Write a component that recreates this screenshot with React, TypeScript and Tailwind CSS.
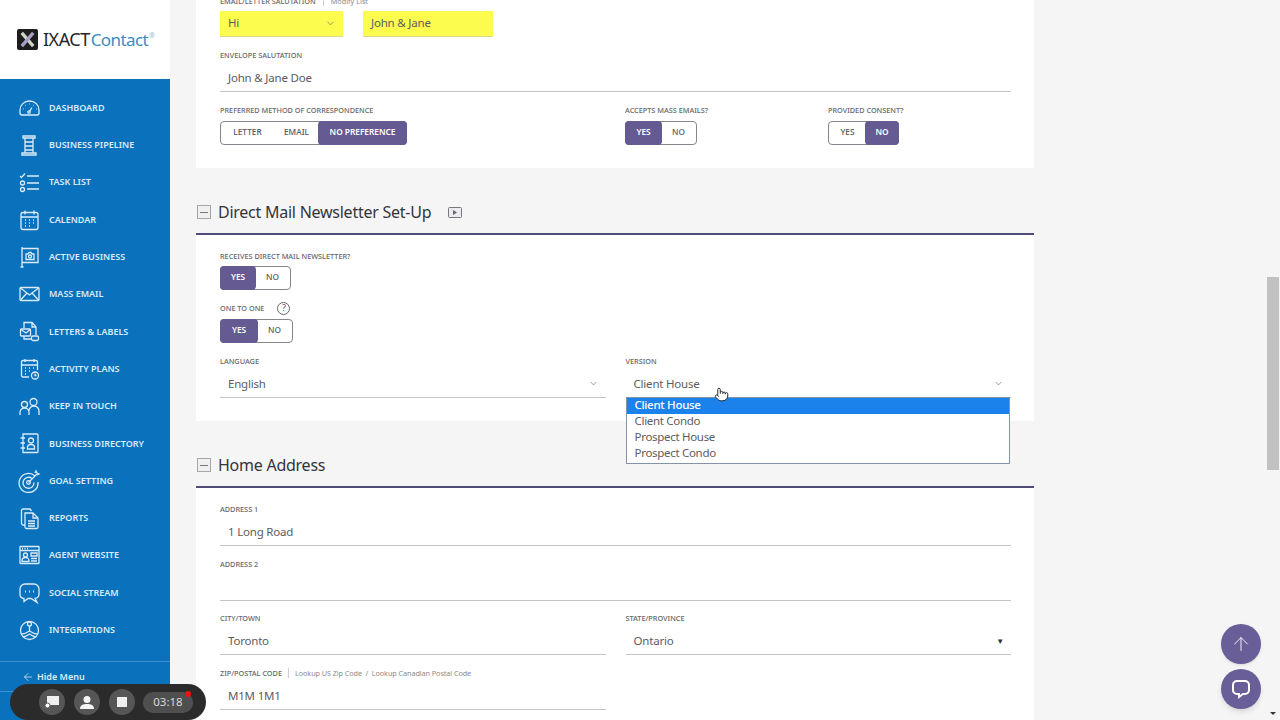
import { ArrowLeft, ArrowUp, ChevronDown, Pointer } from "lucide-react";
import type { ReactNode } from "react";

const navItems: { label: string; icon: ReactNode }[] = [
  {
    label: "DASHBOARD",
    icon: (
      <>
        <path d="M5 19h15a2 2 0 0 0 2-2v-3a9.5 9 0 0 0-19 0v3a2 2 0 0 0 2 2z" />
        <path d="M12.5 15.500l2.500-4M6 13h.5M8.500 9.500h.5M12.500 8h.5M16.500 9.500h.5M19 13h.5" />
        <circle cx="12" cy="16" r="1.200" />
      </>
    ),
  },
  {
    label: "BUSINESS PIPELINE",
    icon: <path d="M6 3h12v2H6zM5 20h14v2H5zM8 5v15M16 5v15M8 9h8M8 13h8M8 17h8" />,
  },
  {
    label: "TASK LIST",
    icon: (
      <>
        <path d="M3 6l1.500 1.500L8 3.500M10 6h12M10 13h12M10 19h12" />
        <circle cx="5.500" cy="13" r="2" />
        <circle cx="5.500" cy="19.500" r="2" />
      </>
    ),
  },
  {
    label: "CALENDAR",
    icon: (
      <>
        <rect x="4" y="4.500" width="17" height="17" rx="2" />
        <path d="M8 2.500v4M17 2.500v4M4 9h17M8 12h1M12 12h1M16 12h1M8 15h1M12 15h1M16 15h1M8 18h1M12 18h1" />
      </>
    ),
  },
  {
    label: "ACTIVE BUSINESS",
    icon: (
      <>
        <path d="M5 2v20M3.500 22h3M5 3.500h16v14H5" />
        <path d="M9 9h2l1-1.500h2l1 1.500h2v5.500H9z" />
        <circle cx="13" cy="11.500" r="1.500" />
      </>
    ),
  },
  {
    label: "MASS EMAIL",
    icon: (
      <>
        <rect x="3" y="5.500" width="19" height="13" rx="1" />
        <path d="M3.500 6l9 7 9-7M3.500 18l6.500-7M21.500 18l-6.500-7" />
      </>
    ),
  },
  {
    label: "LETTERS & LABELS",
    icon: (
      <>
        <path d="M7 9V3.500h8l4 4.500v8" />
        <path d="M15 3.500V8h4" />
        <rect x="3.500" y="10" width="10" height="7" rx="1" />
        <path d="M4 10.500l5 3.500 4-3.500" />
        <rect x="14.500" y="17" width="7" height="4.500" rx="1.500" />
        <path d="M7 17v3h7" />
      </>
    ),
  },
  {
    label: "ACTIVITY PLANS",
    icon: (
      <>
        <path d="M12 20H6a1.500 1.500 0 0 1-1.500-1.500V5A1.500 1.500 0 0 1 6 3.500h13A1.500 1.500 0 0 1 20.500 5v8" />
        <path d="M8 2v3M17 2v3M4.500 8h16M8 11h1M12 11h1M16 11h1M8 14h1M12 14h1M8 17h1" />
        <circle cx="18" cy="18.500" r="3.500" />
        <path d="M18 16.500v2h1.500" />
      </>
    ),
  },
  {
    label: "KEEP IN TOUCH",
    icon: (
      <>
        <circle cx="7.500" cy="10.500" r="3" />
        <circle cx="16.500" cy="8" r="3.500" />
        <path d="M3 21v-2.500a4.500 4.500 0 0 1 9 0V21M12 17a5 5 0 0 1 10 0v4" />
      </>
    ),
  },
  {
    label: "BUSINESS DIRECTORY",
    icon: (
      <>
        <path d="M6 3h14a1 1 0 0 1 1 1v16.500a1 1 0 0 1-1 1H6z" />
        <path d="M3.500 7H8M3.500 12H8M3.500 17H8" />
        <circle cx="14" cy="9.500" r="2.500" />
        <path d="M10.500 18v-1.500a3.500 3 0 0 1 7 0V18z" />
      </>
    ),
  },
  {
    label: "GOAL SETTING",
    icon: (
      <>
        <path d="M18 7a9.500 9.500 0 1 0 3 6" />
        <path d="M15 9.500a5.500 5.500 0 1 0 2 4" />
        <circle cx="11.500" cy="13.500" r="1.800" />
        <path d="M11.500 13.500L20 5M18 4l1-2 1 2 2 1-2 1" />
      </>
    ),
  },
  {
    label: "REPORTS",
    icon: (
      <>
        <path d="M8 19H6a1.500 1.500 0 0 1-1.500-1.500v-13A1.500 1.500 0 0 1 6 3h7l1.500 2" />
        <path d="M8 7h8l5 5v9a1.500 1.500 0 0 1-1.500 1.500H9.500A1.500 1.500 0 0 1 8 21z" />
        <path d="M16 7v5h5M11 15h7M11 17.500h7M11 20h7" />
      </>
    ),
  },
  {
    label: "AGENT WEBSITE",
    icon: (
      <>
        <rect x="3" y="3.500" width="19" height="17" rx="0.500" />
        <path d="M3 7.500h19M5 5.500h1M7.500 5.500h1M10 5.500h1M14 10h6v3h-6zM14 15.500h6M14 18h6" />
        <circle cx="8.500" cy="12" r="2" />
        <path d="M5 18.500v-1a3.500 3 0 0 1 7 0v1z" />
      </>
    ),
  },
  {
    label: "SOCIAL STREAM",
    icon: (
      <>
        <path d="M7 17.500h-.5A4.500 4.500 0 0 1 3 13V8a5 5 0 0 1 5-5h9a5 5 0 0 1 5 5v5a4.500 4.500 0 0 1-4 4.400l2 4-6-4-3 .1-4 3z" />
        <path d="M8 10.500h1M12 10.500h1M16 10.500h1" strokeWidth="1.800" />
      </>
    ),
  },
  {
    label: "INTEGRATIONS",
    icon: (
      <>
        <circle cx="12.500" cy="12.500" r="9" />
        <circle cx="12.500" cy="6" r="2" />
        <path d="M12.500 8v5M4.500 16c3 0 5-1 8-3 3 2 5 3 8 3M6 19c3-.5 5-2 6.500-3 1.500 1 3.500 2.500 6.500 3" />
      </>
    ),
  },
];

function Sidebar() {
  return (
    <aside className="flex w-[170px] shrink-0 flex-col">
      <div className="flex h-[79px] items-center bg-white pb-[1px] pl-[17px]">
        <svg viewBox="0 0 22 22" className="h-[21px] w-[21px]">
          <rect width="22" height="22" rx="2" fill="#1d1d1f" />
          <path d="M5 4l12 14" stroke="#cdd5c8" strokeWidth="3.500" />
          <path d="M17 4L5 18" stroke="#a89fc4" strokeWidth="3.500" />
        </svg>
        <span className="ml-[5px] text-[18px] leading-none tracking-[-0.5px] text-[#26262a]">IXACT</span>
        <span className="ml-[1px] text-[17px] leading-none tracking-[-0.6px] text-[#3c8cc0]">Contact</span>
        <span className="mb-[8px] ml-[1px] text-[7px] leading-none text-[#8fb8d4]">®</span>
      </div>
      <div className="flex flex-1 flex-col bg-[#0a72bd]">
        <nav className="flex flex-col pt-[10px]">
          {navItems.map((item) => (
            <div key={item.label} className="flex h-[37.3px] items-center pl-[17px]">
              <svg
                viewBox="0 0 24 24"
                fill="none"
                stroke="#dcebf7"
                strokeWidth="1.300"
                className="h-[24px] w-[24px]"
              >
                {item.icon}
              </svg>
              <span className="ml-[8px] text-[9px] font-semibold text-[#dcebf7]">{item.label}</span>
            </div>
          ))}
        </nav>
        <div className="mt-[13px] flex h-[31px] items-center border-y border-[#3e8fcb] pl-[22px] text-[#dcebf7]">
          <ArrowLeft size={12} strokeWidth={1.500} />
          <span className="ml-[3px] text-[9px] font-semibold">Hide Menu</span>
        </div>
      </div>
    </aside>
  );
}

function Label({ children }: { children: ReactNode }) {
  return <div className="h-[10px] text-[7.300px] font-medium leading-[10px] text-[#66666c]">{children}</div>;
}

function Field({ label, value, chevron, caret }: { label: ReactNode; value?: string; chevron?: boolean; caret?: boolean }) {
  return (
    <div className="flex flex-col">
      <Label>{label}</Label>
      <div className="flex h-[32px] items-center justify-between border-b border-[#c4c4c6] pl-[8px] pr-[7px] pt-[4px] text-[11.500px] tracking-[-0.2px] text-[#5c5c60]">
        <span>{value}</span>
        {chevron && <ChevronDown size={11} strokeWidth={1.300} />}
        {caret && <span className="text-[8px] text-[#333]">▼</span>}
      </div>
    </div>
  );
}

function Toggle({ options, active, widths }: { options: string[]; active: string; widths: number[] }) {
  return (
    <div className="flex h-[24px] w-fit rounded-[4px] border border-[#85858b] bg-white">
      {options.map((o, i) => (
        <div
          key={o}
          style={{ width: widths[i] }}
          className={
            o === active
              ? "-m-[1px] flex items-center justify-center rounded-[4px] bg-[#655a91] pb-[1px] text-[8.300px] font-semibold text-white"
              : "flex items-center justify-center pb-[1px] text-[8.300px] font-medium text-[#56565c]"
          }
        >
          {o}
        </div>
      ))}
    </div>
  );
}

function SectionHead({ title, video }: { title: string; video?: boolean }) {
  return (
    <div className="flex h-[67px] items-start border-b-2 border-[#504c78] pt-[31px]">
      <div className="flex h-[26px] items-center">
        <div className="ml-[1px] flex h-[14px] w-[14px] items-center justify-center border border-[#a6a6aa] bg-[#f0f0f0]">
          <div className="h-[1px] w-[8px] bg-[#77777c]" />
        </div>
        <h2 className="ml-[7px] text-[16px] tracking-[-0.25px] text-[#34343a]">{title}</h2>
        {video && (
          <svg viewBox="0 0 14 11" className="ml-[17px] h-[11px] w-[14px]" fill="none" stroke="#77777c">
            <rect x="0.500" y="0.500" width="13" height="10" rx="1" fill="#ececf0" />
            <path d="M5 3l4 2.500L5 8z" fill="#66666c" stroke="none" />
          </svg>
        )}
      </div>
    </div>
  );
}

function Main() {
  return (
    <main className="relative min-w-0 flex-1 overflow-hidden pl-[26px]">
      <div className="-mt-[4px] w-[838px]">
        <section className="flex flex-col bg-white pb-[23px] pl-[24px] pr-[23px]">
          <div className="flex h-[10px] items-center">
            <Label>EMAIL/LETTER SALUTATION</Label>
            <span className="mx-[7px] h-[10px] w-[1px] bg-[#d0d0d2]" />
            <span className="text-[7.300px] text-[#8a8a90]">Modify List</span>
          </div>
          <div className="mt-[5px] flex gap-[20px]">
            <div className="flex h-[26px] w-[123px] items-center justify-between border-b border-[#dcdc8c] bg-[#fcfc4e] pb-[1px] pl-[8px] pr-[7px] text-[11.500px] tracking-[-0.2px] text-[#5c5c60]">
              <span>Hi</span>
              <ChevronDown size={11} strokeWidth={1.300} />
            </div>
            <div className="flex h-[26px] w-[130px] items-center border-b border-[#dcdc8c] bg-[#fcfc4e] pb-[1px] pl-[8px] text-[11.500px] tracking-[-0.2px] text-[#5c5c60]">
              John &amp; Jane
            </div>
          </div>
          <div className="mt-[13px]">
            <Field label="ENVELOPE SALUTATION" value="John & Jane Doe" />
          </div>
          <div className="mt-[13px] flex">
            <div className="w-[405px]">
              <Label>PREFERRED METHOD OF CORRESPONDENCE</Label>
              <div className="mt-[6px]">
                <Toggle options={["LETTER", "EMAIL", "NO PREFERENCE"]} active="NO PREFERENCE" widths={[53, 45, 89]} />
              </div>
            </div>
            <div className="w-[203px]">
              <Label>ACCEPTS MASS EMAILS?</Label>
              <div className="mt-[6px]">
                <Toggle options={["YES", "NO"]} active="YES" widths={[37, 35]} />
              </div>
            </div>
            <div>
              <Label>PROVIDED CONSENT?</Label>
              <div className="mt-[6px]">
                <Toggle options={["YES", "NO"]} active="NO" widths={[37, 34]} />
              </div>
            </div>
          </div>
        </section>

        <SectionHead title="Direct Mail Newsletter Set-Up" video />
        <section className="relative flex flex-col bg-white pb-[23px] pl-[24px] pr-[23px] pt-[16px]">
          <Label>RECEIVES DIRECT MAIL NEWSLETTER?</Label>
          <div className="mt-[5px]">
            <Toggle options={["YES", "NO"]} active="YES" widths={[36, 35]} />
          </div>
          <div className="mt-[13px] flex h-[10px] items-center">
            <Label>ONE TO ONE</Label>
            <span className="ml-[13px] flex h-[13px] w-[13px] items-center justify-center rounded-full border border-[#66666c] text-[9px] text-[#55555a]">?</span>
          </div>
          <div className="mt-[6px]">
            <Toggle options={["YES", "NO"]} active="YES" widths={[38, 35]} />
          </div>
          <div className="mt-[13px] grid grid-cols-2 gap-x-[20px]">
            <Field label="LANGUAGE" value="English" chevron />
            <div className="relative">
              <Field label="VERSION" value="Client House" chevron />
              <div className="absolute left-0 right-[1px] top-[41px] z-10 flex flex-col border border-[#8494a8] bg-white pb-[1px] text-[11.500px] leading-[14px] tracking-[-0.3px] text-[#5c5c60]">
                <div className="h-[16px] bg-[#1a82ea] pl-[8px] font-medium text-white">Client House</div>
                <div className="h-[16px] pl-[8px]">Client Condo</div>
                <div className="h-[16px] pl-[8px]">Prospect House</div>
                <div className="h-[16px] pl-[8px]">Prospect Condo</div>
              </div>
              <Pointer size={15} fill="white" stroke="#222" strokeWidth={1.500} className="absolute left-[88px] top-[31px] z-20" />
            </div>
          </div>
        </section>

        <SectionHead title="Home Address" />
        <section className="flex flex-col bg-white pb-[23px] pl-[24px] pr-[23px] pt-[16px]">
          <Field label="ADDRESS 1" value="1 Long Road" />
          <div className="mt-[13px]">
            <Field label="ADDRESS 2" />
          </div>
          <div className="mt-[12px] grid grid-cols-2 gap-x-[20px]">
            <Field label="CITY/TOWN" value="Toronto" />
            <Field label="STATE/PROVINCE" value="Ontario" caret />
          </div>
          <div className="mt-[13px] grid grid-cols-2 gap-x-[20px]">
            <Field
              label={
                <span className="flex items-center">
                  ZIP/POSTAL CODE
                  <span className="mx-[6px] h-[10px] w-[1px] bg-[#d0d0d2]" />
                  <span className="font-normal tracking-[-0.1px] text-[#8a8a90]">Lookup US Zip Code&nbsp;&nbsp;/&nbsp;&nbsp;Lookup Canadian Postal Code</span>
                </span>
              }
              value="M1M 1M1"
            />
          </div>
        </section>
      </div>
    </main>
  );
}

function Recorder() {
  return (
    <div className="absolute bottom-0 left-[10px] flex h-[36px] w-[196px] items-center rounded-[18px] bg-[#2b2b2b] pl-[29px]">
      <div className="flex h-[26px] w-[26px] items-center justify-center rounded-full bg-[#565656]">
        <svg viewBox="0 0 14 12" className="h-[12px] w-[14px]" fill="white">
          <rect x="2" y="0" width="12" height="9" fill="#f0f0f0" />
          <circle cx="2.500" cy="9.500" r="2.500" stroke="#565656" />
        </svg>
      </div>
      <div className="ml-[9px] flex h-[26px] w-[26px] items-center justify-center rounded-full bg-[#565656]">
        <svg viewBox="0 0 14 13" className="h-[13px] w-[14px]" fill="#f4f4f4">
          <circle cx="7" cy="3.500" r="3.500" />
          <path d="M0 13c0-4 3-5 7-5s7 1 7 5z" />
        </svg>
      </div>
      <div className="ml-[9px] flex h-[26px] w-[26px] items-center justify-center rounded-full bg-[#565656]">
        <div className="h-[10px] w-[10px] bg-[#f0f0f0]" />
      </div>
      <div className="relative ml-[8px] flex h-[21px] w-[50px] items-center justify-center rounded-[10px] bg-[#4f4f4f] text-[11.500px] text-[#d8d8d8]">
        03:18
        <span className="absolute -top-[1px] right-[2px] h-[6px] w-[6px] rounded-full bg-[#ee1111]" />
      </div>
    </div>
  );
}

export default function App() {
  return (
    <div className="relative flex h-screen w-full overflow-hidden bg-[#f5f5f6] [font-family:'Noto_Sans',sans-serif]">
      <Sidebar />
      <Main />
      <div className="absolute right-0 top-[277px] mr-[1px] h-[193px] w-[12px] bg-[#c1c1c1]" />
      <span className="absolute bottom-[5px] right-[4px] h-0 w-0 border-x-[3px] border-t-[3px] border-x-transparent border-t-[#333]" />
      <button className="absolute left-[1221px] top-[624px] flex h-[40px] w-[40px] items-center justify-center rounded-full bg-[#6a5e98] text-white shadow">
        <ArrowUp size={22} strokeWidth={1} />
      </button>
      <button className="absolute left-[1221px] top-[669px] flex h-[40px] w-[40px] items-center justify-center rounded-full bg-[#6a5e98] shadow-md">
        <svg viewBox="0 0 20 20" className="h-[20px] w-[20px]" fill="none" stroke="white" strokeWidth="2">
          <path d="M6 2h8a4 4 0 0 1 4 4v5a4 4 0 0 1-4 4h-2l-4 3v-3H6a4 4 0 0 1-4-4V6a4 4 0 0 1 4-4z" />
        </svg>
      </button>
      <Recorder />
    </div>
  );
}
